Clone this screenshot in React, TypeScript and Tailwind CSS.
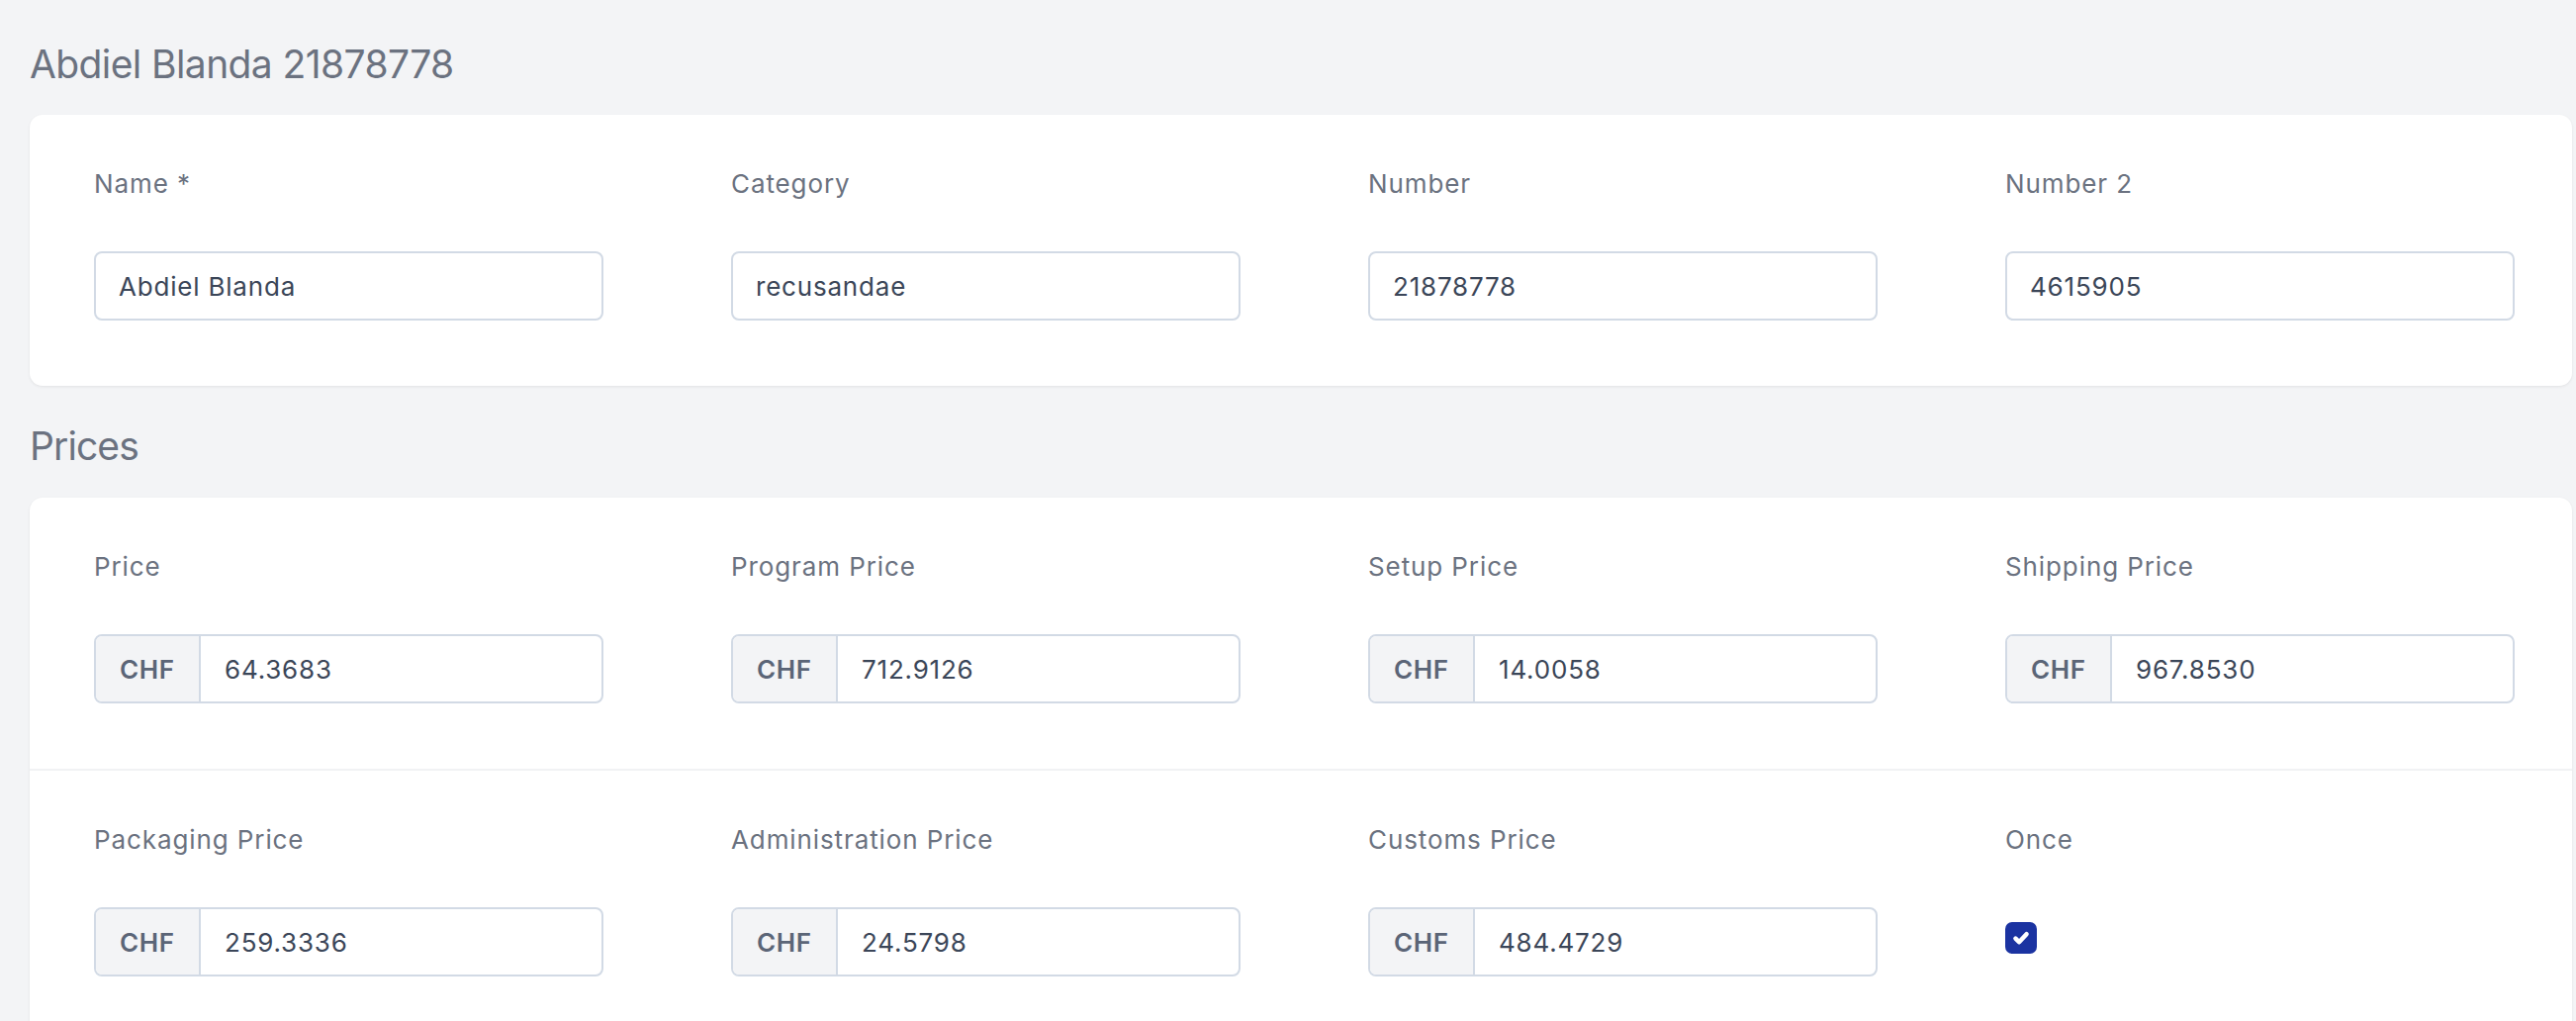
import React from "react";

type Field = { label: string; value: string };

const general: Field[] = [
  { label: "Name *", value: "Abdiel Blanda" },
  { label: "Category", value: "recusandae" },
  { label: "Number", value: "21878778" },
  { label: "Number 2", value: "4615905" },
];

const priceRows: (Field | null)[][] = [
  [
    { label: "Price", value: "64.3683" },
    { label: "Program Price", value: "712.9126" },
    { label: "Setup Price", value: "14.0058" },
    { label: "Shipping Price", value: "967.8530" },
  ],
  [
    { label: "Packaging Price", value: "259.3336" },
    { label: "Administration Price", value: "24.5798" },
    { label: "Customs Price", value: "484.4729" },
    null,
  ],
];

function Label({ children }: { children: React.ReactNode }) {
  return (
    <div className="h-[39px] text-[26px] leading-[39px] tracking-[0.9px] text-[#6b7280]">{children}</div>
  );
}

function TextInput({ value }: { value: string }) {
  return (
    <div className="mt-[49px] flex h-[70px] items-center rounded-[8px] border-2 border-[#d2dae5] bg-white px-[23px] text-[26px] tracking-[0.8px] text-[#3b4658]">
      {value}
    </div>
  );
}

function MoneyInput({ value }: { value: string }) {
  return (
    <div className="mt-[49px] flex h-[70px] overflow-hidden rounded-[8px] border-2 border-[#d2dae5] bg-white text-[26px]">
      <div className="flex w-[106px] items-center border-r-2 border-[#d2dae5] bg-[#f3f4f6] pl-[24px] font-semibold tracking-[0.6px] text-[#5b6577]">
        CHF
      </div>
      <div className="flex flex-1 items-center pl-[24px] tracking-[0.8px] text-[#3b4658]">{value}</div>
    </div>
  );
}

function Checkbox() {
  return (
    <div className="mt-[64px] flex h-[32px] w-[32px] items-center justify-center rounded-[7px] bg-[#1b33a1]">
      <svg viewBox="0 0 16 16" className="h-[26px] w-[26px]" fill="none">
        <path d="M4.6 8.4l2.2 2.2 4.6-4.9" stroke="white" strokeWidth="2.8" strokeLinecap="round" strokeLinejoin="round" />
      </svg>
    </div>
  );
}

export default function App() {
  return (
    <div
      className="min-h-[1032px] bg-[#f3f4f6] pl-[30px] pr-[4px] pt-[38px]"
      style={{ fontFamily: "Inter, 'Noto Sans', sans-serif" }}
    >
      <h1 className="h-[53px] text-[39px] leading-[53px] tracking-[-0.6px] text-[#6b7280]">Abdiel Blanda 21878778</h1>

      <div className="mt-[25px] rounded-[13px] bg-white pl-[65px] pr-[58px] pb-[66px] pt-[50px] shadow-[0_1px_3px_rgba(0,0,0,0.08)]">
        <div className="grid grid-cols-4 gap-x-[129px]">
          {general.map((f) => (
            <div key={f.label}>
              <Label>{f.label}</Label>
              <TextInput value={f.value} />
            </div>
          ))}
        </div>
      </div>

      <h2 className="mt-[34px] h-[53px] text-[39px] leading-[53px] tracking-[-0.9px] text-[#6b7280]">Prices</h2>

      <div className="mt-[26px] rounded-[13px] bg-white shadow-[0_1px_3px_rgba(0,0,0,0.08)]">
        {priceRows.map((row, i) => (
          <div
            key={i}
            className={`grid grid-cols-4 gap-x-[129px] pl-[65px] pr-[58px] pb-[66px] pt-[50px] ${i > 0 ? "border-t-2 border-[#f1f2f4]" : ""}`}
          >
            {row.map((f, j) =>
              f ? (
                <div key={f.label}>
                  <Label>{f.label}</Label>
                  <MoneyInput value={f.value} />
                </div>
              ) : (
                <div key={j}>
                  <Label>Once</Label>
                  <Checkbox />
                </div>
              )
            )}
          </div>
        ))}
      </div>
    </div>
  );
}
